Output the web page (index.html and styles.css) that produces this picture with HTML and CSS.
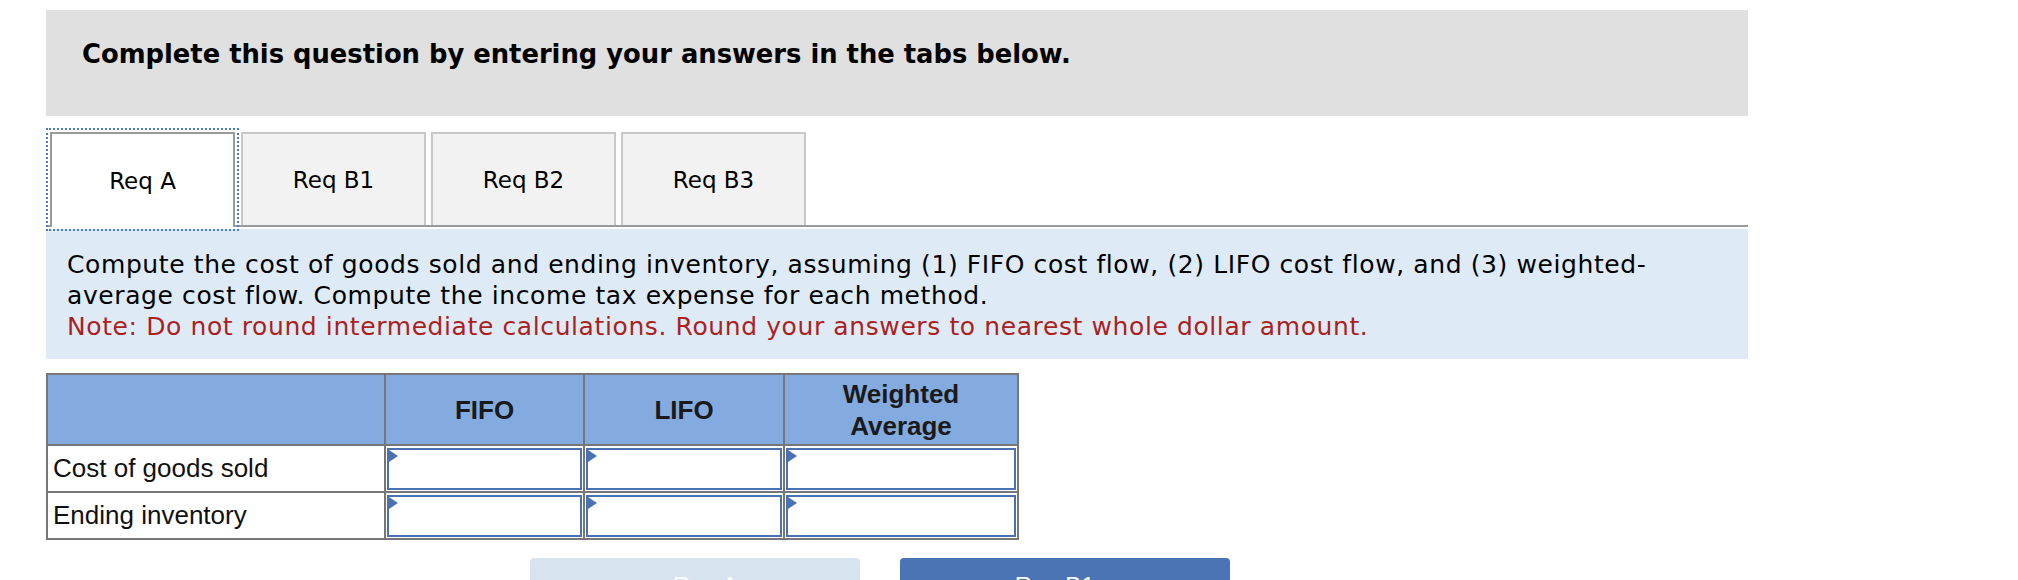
FILE: index.html
```html
<!DOCTYPE html>
<html>
<head>
<meta charset="utf-8">
<link rel="stylesheet" href="styles.css">
</head>
<body>
<div class="page">
  <div class="banner">Complete this question by entering your answers in the tabs below.</div>

  <div class="tabs">
    <div class="tab active">Req A</div>
    <div class="tab">Req B1</div>
    <div class="tab">Req B2</div>
    <div class="tab">Req B3</div>
  </div>

  <div class="instructions">
    <p class="q">Compute the cost of goods sold and ending inventory, assuming (1) FIFO cost flow, (2) LIFO cost flow, and (3) weighted-average cost flow. Compute the income tax expense for each method.</p>
    <p class="note">Note: Do not round intermediate calculations. Round your answers to nearest whole dollar amount.</p>
  </div>

  <table class="grid">
    <colgroup>
      <col class="c-label">
      <col class="c-fifo">
      <col class="c-lifo">
      <col class="c-wa">
    </colgroup>
    <thead>
      <tr>
        <th></th>
        <th>FIFO</th>
        <th>LIFO</th>
        <th>Weighted<br>Average</th>
      </tr>
    </thead>
    <tbody>
      <tr>
        <td class="label">Cost of goods sold</td>
        <td class="cell"><div class="input"><span class="flag"></span></div></td>
        <td class="cell"><div class="input"><span class="flag"></span></div></td>
        <td class="cell"><div class="input"><span class="flag"></span></div></td>
      </tr>
      <tr>
        <td class="label">Ending inventory</td>
        <td class="cell"><div class="input"><span class="flag"></span></div></td>
        <td class="cell"><div class="input"><span class="flag"></span></div></td>
        <td class="cell"><div class="input"><span class="flag"></span></div></td>
      </tr>
    </tbody>
  </table>

  <div class="nav">
    <div class="btn prev">&lt; Req A</div>
    <div class="btn next">Req B1 &gt;</div>
  </div>
</div>
</body>
</html>
```

FILE: styles.css
```css
html, body {
  margin: 0;
  padding: 0;
  background: #ffffff;
}

.page {
  padding: 10px 0 0 46px;
  width: 1702px;
  font-family: "DejaVu Sans", Verdana, sans-serif;
  color: #000;
}

.banner {
  box-sizing: border-box;
  height: 106px;
  background: #e0e0e0;
  padding: 28px 0 0 36px;
  font-weight: bold;
  font-size: 25.8px;
  line-height: 32px;
}

.tabs {
  display: flex;
  margin-top: 16px;
  height: 95px;
  border-bottom: 2px solid #9a9a9a;
  box-sizing: border-box;
}

.tab {
  box-sizing: border-box;
  width: 185px;
  height: 93px;
  margin-right: 5px;
  background: #f2f2f2;
  border: 2px solid #c8c8c8;
  border-bottom: none;
  display: flex;
  align-items: center;
  justify-content: center;
  font-size: 23px;
}

.tab.active {
  margin-left: 4px;
  margin-right: 6px;
  height: 95px;
  background: #ffffff;
  border-color: #9a9a9a;
  outline: 2px dotted #4a7cc4;
  outline-offset: 2px;
  position: relative;
}

.instructions {
  margin-top: 2px;
  background: #deebf7;
  padding: 20px 20px 17px 21px;
  font-size: 25px;
  letter-spacing: 0.6px;
  line-height: 31px;
}

.instructions p {
  margin: 0;
}

.note {
  color: #ab1f1f;
}

.grid {
  margin-top: 14px;
  border-collapse: collapse;
  font-family: "Liberation Sans", Arial, sans-serif;
  font-size: 26px;
  border: 2px solid #777777;
}

.c-label { width: 338px; }
.c-fifo { width: 199px; }
.c-lifo { width: 200px; }
.c-wa { width: 234px; }

.grid th {
  background: #84abe0;
  border: 2px solid #777777;
  height: 69px;
  padding: 0;
  font-weight: bold;
  line-height: 32px;
  color: #1a1a1a;
}

.grid td {
  border: 2px solid #777777;
  padding: 0;
  height: 43px;
}

.grid td.label {
  padding-left: 5px;
  color: #111;
}

.grid td.cell {
  padding: 1px;
}

.input {
  box-sizing: border-box;
  height: 42px;
  border: 2px solid #4a72b2;
  background: #fff;
  position: relative;
}

.flag {
  position: absolute;
  left: 0;
  top: 0;
  width: 0;
  height: 0;
  border-top: 6px solid transparent;
  border-bottom: 6px solid transparent;
  border-left: 9px solid #4a72b2;
}

.nav {
  display: flex;
  gap: 40px;
  margin-top: 18px;
  padding-left: 484px;
}

.btn {
  width: 330px;
  height: 56px;
  border-radius: 4px;
  display: flex;
  align-items: center;
  justify-content: center;
  font-family: "Liberation Sans", Arial, sans-serif;
  font-size: 24px;
  color: #fff;
}

.btn.prev {
  background: #d8e3f0;
}

.btn.next {
  background: #4a74b3;
}
```
